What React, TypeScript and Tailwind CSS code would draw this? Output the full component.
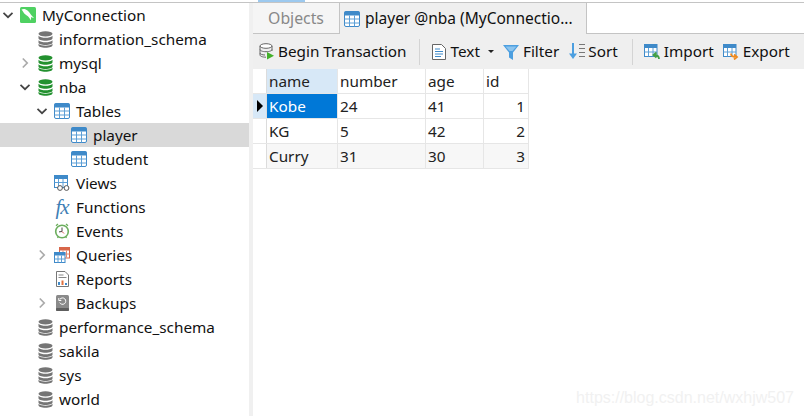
import React from 'react';

const Chevron: React.FC<{ open?: boolean }> = ({ open }) => (
  <svg width="12" height="12" viewBox="0 0 12 12" fill="none" stroke={open ? '#444' : '#aaa'} strokeWidth="1.7">
    {open ? <path d="M1.5 3.8 6 8.2l4.500-4.400" /> : <path d="M3.800 1.500 8.200 6l-4.400 4.500" />}
  </svg>
);

const Db: React.FC<{ color: string }> = ({ color }) => (
  <svg width="15" height="17" viewBox="0 0 15 17" fill={color}>
    <ellipse cx="7.500" cy="2.800" rx="7" ry="2.600" />
    <path d="M.5 4.700c1.500 1.500 4 2 7 2s5.500-.5 7-2v2.500c0 1.400-3 2.500-7 2.500s-7-1.100-7-2.500z" />
    <path d="M.5 9.200c1.500 1.500 4 2 7 2s5.500-.5 7-2v2.300c0 1.400-3 2.500-7 2.500s-7-1.100-7-2.500z" />
    <path d="M.5 12.800c1.500 1.400 4 1.900 7 1.900s5.500-.5 7-1.900v1.400c0 1.400-3 2.500-7 2.500s-7-1.100-7-2.500z" />
  </svg>
);

const TableIcon: React.FC<{ size?: number }> = ({ size = 16 }) => (
  <svg width={size} height={size} viewBox="0 0 16 16" fill="none">
    <rect x=".5" y=".5" width="15" height="15" rx="1.500" fill="#fff" stroke="#3f8ac9" />
    <rect x=".5" y=".5" width="15" height="4" fill="#3f8ac9" />
    <path d="M.5 8h15M.5 12h15M5.500 4.500v11M10.500 4.500v11" stroke="#5c9fd6" />
  </svg>
);

const ConnIcon = () => (
  <svg width="16" height="16" viewBox="0 0 16 16">
    <rect width="16" height="16" rx="1.500" fill="#4fd162" />
    <path d="M1.500 2.500c2-1 4.500-.5 6 1 1.500 1.300 2.500 2.500 3.300 4 .8 1.300 2 2.500 3.200 3.300-1.300.2-2.300-.2-3-.8.2 1.300.1 2.500-.3 3.500-.6-1.700-1.500-3-2.800-4.200C6 7.600 4 6.800 3.300 5 2.800 4 2.200 3.300 1.500 2.500z" fill="#fff" />
  </svg>
);

const ViewsIcon = () => (
  <svg width="16" height="16" viewBox="0 0 16 16" fill="none">
    <rect x=".5" y=".5" width="13" height="12" fill="#fff" stroke="#3f8ac9" />
    <rect x=".5" y=".5" width="13" height="3.500" fill="#3f8ac9" />
    <path d="M.5 7.500h13M4.500 4v8M9 4v8" stroke="#5c9fd6" />
    <circle cx="6" cy="13" r="2.400" fill="#fff" stroke="#555" />
    <circle cx="12.500" cy="13" r="2.400" fill="#fff" stroke="#555" />
  </svg>
);

const ClockIcon = () => (
  <svg width="16" height="16" viewBox="0 0 16 16" fill="none">
    <circle cx="8" cy="8.500" r="6.300" fill="#fff" stroke="#6cae5e" strokeWidth="1.600" />
    <path d="M2 2.800 4 1M14 2.800 12 1M3.500 15l1-1.500M12.500 15l-1-1.500" stroke="#6cae5e" strokeWidth="1.300" />
    <path d="M8 4.500v4l-3 .4" stroke="#444" />
    <path d="m8 8.500 2 2" stroke="#d9534f" />
  </svg>
);

const QueriesIcon = () => (
  <svg width="16" height="16" viewBox="0 0 16 16" fill="none">
    <rect x="5.500" y=".5" width="10" height="10.500" fill="#fff" stroke="#d8674a" />
    <rect x="5.500" y=".5" width="10" height="3" fill="#d8674a" />
    <path d="M9 3.500v7M12.500 3.500v7M5.500 7h10" stroke="#e08a72" />
    <rect x=".5" y="5.500" width="10.500" height="10" fill="#fff" stroke="#3f8ac9" />
    <rect x=".5" y="5.500" width="10.500" height="3" fill="#3f8ac9" />
    <path d="M4 8.500v7M7.500 8.500v7M.5 12h10.500" stroke="#5c9fd6" />
  </svg>
);

const ReportsIcon = () => (
  <svg width="13" height="16" viewBox="0 0 13 16" fill="none">
    <path d="M.5.5h8.500l3.500 3.500v11.500H.5z" fill="#fff" stroke="#777" />
    <path d="M2.500 4h5M2.500 6.500h8" stroke="#888" />
    <path d="M3 14v-3" stroke="#3f8ac9" strokeWidth="2" />
    <path d="M6.500 14V9.500" stroke="#e0703f" strokeWidth="2" />
    <path d="M10 14v-2" stroke="#3f8ac9" strokeWidth="2" />
  </svg>
);

const BackupIcon = () => (
  <svg width="13" height="16" viewBox="0 0 13 16" fill="none">
    <rect width="13" height="16" rx="1.500" fill="#8a8a8a" />
    <rect y="13" width="13" height="3" rx="1" fill="#5e5e5e" />
    <path d="M4 4.200a3.200 3.200 0 1 1-.3 3.400" stroke="#fff" />
    <path d="M2.800 3v2.500h2.500" stroke="#fff" />
  </svg>
);

type Row = {
  label: string;
  indent: number;
  chevron?: 'open' | 'closed';
  icon: React.ReactNode;
  active?: boolean;
};

const rows: Row[] = [
  { label: 'MyConnection', indent: 0, chevron: 'open', icon: <ConnIcon /> },
  { label: 'information_schema', indent: 17, icon: <Db color="#757575" /> },
  { label: 'mysql', indent: 17, chevron: 'closed', icon: <Db color="#23912f" /> },
  { label: 'nba', indent: 17, chevron: 'open', icon: <Db color="#23912f" /> },
  { label: 'Tables', indent: 34, chevron: 'open', icon: <TableIcon /> },
  { label: 'player', indent: 51, icon: <TableIcon />, active: true },
  { label: 'student', indent: 51, icon: <TableIcon /> },
  { label: 'Views', indent: 34, icon: <ViewsIcon /> },
  { label: 'Functions', indent: 34, icon: <span className="font-['Liberation_Serif'] italic text-[21px] leading-none tracking-[-1px] text-[#3f7fb5]">fx</span> },
  { label: 'Events', indent: 34, icon: <ClockIcon /> },
  { label: 'Queries', indent: 34, chevron: 'closed', icon: <QueriesIcon /> },
  { label: 'Reports', indent: 34, icon: <ReportsIcon /> },
  { label: 'Backups', indent: 34, chevron: 'closed', icon: <BackupIcon /> },
  { label: 'performance_schema', indent: 17, icon: <Db color="#757575" /> },
  { label: 'sakila', indent: 17, icon: <Db color="#757575" /> },
  { label: 'sys', indent: 17, icon: <Db color="#757575" /> },
  { label: 'world', indent: 17, icon: <Db color="#757575" /> },
];

const Sidebar = () => (
  <aside className="w-[249px] shrink-0 bg-white">
    {rows.map(r => (
      <div key={r.label} className={`flex h-6 items-center ${r.active ? 'bg-[#d9d9d9]' : ''}`}>
        <div className="flex shrink-0 items-center" style={{ paddingLeft: r.indent + 2 }}>
          <span className="flex w-[17px] justify-start">{r.chevron && <Chevron open={r.chevron === 'open'} />}</span>
          <span className="flex w-[18px] justify-center">{r.icon}</span>
        </div>
        <span className="ml-[5px] whitespace-nowrap text-[#111]">{r.label}</span>
      </div>
    ))}
  </aside>
);

const BeginIcon = () => (
  <svg width="16" height="17" viewBox="0 0 16 17" fill="none">
    <ellipse cx="7" cy="3" rx="6" ry="2.300" fill="#fff" stroke="#666" />
    <path d="M1 3v9c0 1.200 2.500 2.200 6 2.200M13 3v5M1 6.500c0 1.200 2.500 2.200 6 2.200s6-1 6-2.200M1 10c0 1.200 2.500 2 5 2" stroke="#666" />
    <path d="m8 9 7 3.800L8 16.500z" fill="#43b02a" />
  </svg>
);

const TextIcon = () => (
  <svg width="14" height="16" viewBox="0 0 14 16" fill="none">
    <path d="M.5.5h9l4 4v11H.5z" fill="#fff" stroke="#666" />
    <path d="M3 5h5M3 7.500h8M3 10h8M3 12.500h6" stroke="#3f8ac9" />
  </svg>
);

const FilterIcon = () => (
  <svg width="16" height="16" viewBox="0 0 16 16">
    <path d="M0 1h16L10 8.500V16l-4-2.500V8.500z" fill="#4c9fe0" />
    <path d="M2.500 2.500h11L9.500 7h-3z" fill="#8cc4ee" />
  </svg>
);

const SortIcon = () => (
  <svg width="16" height="17" viewBox="0 0 16 17" fill="none">
    <path d="M4 0v13" stroke="#4c9fe0" strokeWidth="2" />
    <path d="M0 10.500h8L4 16z" fill="#4c9fe0" />
    <path d="M10 1.500h6M10 5.500h6M10 9.500h6M10 13.500h6" stroke="#777" />
  </svg>
);

const ImpExpIcon: React.FC<{ color: string; exportIcon?: boolean }> = ({ color, exportIcon }) => (
  <svg width="16" height="16" viewBox="0 0 16 16" fill="none">
    <rect x=".5" y=".5" width="12.500" height="12" fill="#fff" stroke="#3f8ac9" />
    <rect x=".5" y=".5" width="12.500" height="3.500" fill="#3f8ac9" />
    <path d="M.5 8h12.500M4.500 4v8.500M9 4v8.500" stroke="#5c9fd6" />
    {exportIcon ? (
      <path d="M8 9.500c0 3 2 3.500 4.500 3.500M11 10.500l3 2.500-3 2.500" stroke={color} strokeWidth="1.800" />
    ) : (
      <path d="M15 15c0-3-2-4-5-4M12.500 8.500 9.500 11l3 2.500" stroke={color} strokeWidth="1.800" />
    )}
  </svg>
);

const Tool: React.FC<{ icon: React.ReactNode; label: string; className?: string }> = ({ icon, label, className }) => (
  <div className={`flex items-center gap-[3px] whitespace-nowrap ${className ?? ''}`}>
    {icon}
    <span>{label}</span>
  </div>
);

const ToolDivider: React.FC<{ className: string }> = ({ className }) => (
  <div className={`h-[26px] w-px shrink-0 bg-[#d4d4d4] ${className}`} />
);

const Toolbar = () => (
  <div className="flex h-[35px] items-center bg-[#efefef] pl-[6px] text-[#111]">
    <Tool icon={<BeginIcon />} label="Begin Transaction" />
    <ToolDivider className="ml-[12px] mr-[12px]" />
    <Tool icon={<TextIcon />} label="Text" className="gap-[5px]" />
    <span className="ml-[8px] mr-[9px] h-0 w-0 border-x-[3px] border-t-[3px] border-x-transparent border-t-[#222]" />
    <Tool icon={<FilterIcon />} label="Filter" className="gap-[4px]" />
    <Tool icon={<SortIcon />} label="Sort" className="ml-[10px] gap-[3px]" />
    <ToolDivider className="ml-[14px] mr-[11px]" />
    <Tool icon={<ImpExpIcon color="#43a047" />} label="Import" className="gap-[4px]" />
    <Tool icon={<ImpExpIcon color="#ef8a1d" exportIcon />} label="Export" className="ml-[9px] gap-[4px]" />
  </div>
);

const data = [
  ['Kobe', '24', '41', '1'],
  ['KG', '5', '42', '2'],
  ['Curry', '31', '30', '3'],
];

const cols = 'grid grid-cols-[14px_71px_88px_58px_45px]';

const Grid = () => (
  <div className="w-[276px] text-[#222]">
    <div className={`${cols} h-[25px] border-b border-[#e6e6e6] bg-white leading-[24px]`}>
      <div className="border-r border-[#dcdcdc] bg-white" />
      <div className="border-r border-[#e6e6e6] bg-[#d7e8f7] pl-[2px]">name</div>
      <div className="border-r border-[#e6e6e6] pl-[2px]">number</div>
      <div className="border-r border-[#e6e6e6] pl-[2px]">age</div>
      <div className="border-r border-[#e6e6e6] pl-[2px]">id</div>
    </div>
    {data.map((d, i) => (
      <div key={d[0]} className={`${cols} h-[25px] border-b border-[#e6e6e6] leading-[24px] ${i === 2 ? 'bg-[#f7f7f7]' : 'bg-white'}`}>
        <div className={`flex items-center justify-end border-r border-[#dcdcdc] pr-[3px] ${i === 0 ? 'bg-[#d7e8f7]' : 'bg-white'}`}>
          {i === 0 && <span className="h-0 w-0 border-y-[6px] border-l-[6px] border-y-transparent border-l-black" />}
        </div>
        <div className={`border-r border-[#e6e6e6] pl-[2px] ${i === 0 ? 'bg-[#0078d7] text-white' : ''}`}>{d[0]}</div>
        <div className="border-r border-[#e6e6e6] pl-[2px]">{d[1]}</div>
        <div className="border-r border-[#e6e6e6] pl-[2px]">{d[2]}</div>
        <div className="border-r border-[#e6e6e6] pr-[3px] text-right">{d[3]}</div>
      </div>
    ))}
  </div>
);

const Tabs = () => (
  <div className="flex h-[31px]">
    <div className="flex w-[87px] items-center justify-center border-r border-b border-[#c4c4c4] bg-[#f5f5f5] pt-[1px] text-[15.800px] text-[#888]">Objects</div>
    <div className="flex w-[246px] items-center gap-[5px] bg-[#efefef] pl-[4px] text-[#111]">
      <TableIcon />
      <span className="whitespace-nowrap text-[15.500px]">player @nba (MyConnectio...</span>
    </div>
    <div className="flex-1 border-b border-l border-[#c4c4c4] bg-white" />
  </div>
);

export default function App() {
  return (
    <div className="relative h-[416px] w-[804px] overflow-hidden bg-white font-['Noto_Sans','Open_Sans',sans-serif] text-[15.300px]">
      <div className="absolute left-[258px] top-0 h-[2px] w-[47px] bg-[#9cc9ef]" />
      <div className="mt-[2px] h-px bg-[#c4c4c4]" />
      <div className="flex h-[413px]">
        <Sidebar />
        <div className="w-[4px] shrink-0 bg-[#f0f0f0]" />
        <main className="flex-1">
          <Tabs />
          <Toolbar />
          <Grid />
        </main>
      </div>
      <div className="absolute bottom-[6px] right-[10px] font-['Liberation_Sans',sans-serif] text-[16px] text-[#f1f1f1]">https://blog.csdn.net/wxhjw507</div>
    </div>
  );
}
